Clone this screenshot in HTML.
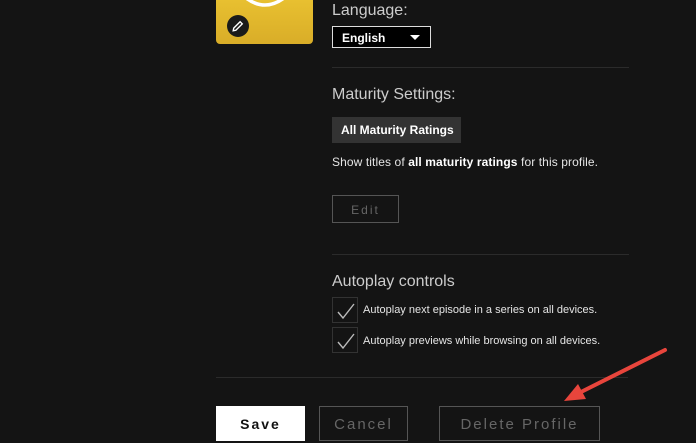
<!DOCTYPE html>
<html><head><meta charset="utf-8"><style>
*{margin:0;padding:0;box-sizing:border-box}
body{width:696px;height:443px;background:#141414;position:relative;overflow:hidden;font-family:"Liberation Sans",sans-serif;color:#ccc}
.a{position:absolute}
.hr{position:absolute;height:1px;background:#2b2b2b}
.btn{position:absolute;border:1px solid #555;color:#666;text-align:center;letter-spacing:2px}
.cb{position:absolute;width:26px;height:26px;border:1px solid #333;background:#141414}
</style></head><body>
<div class="a" style="left:216px;top:0;width:97px;height:44px;background:linear-gradient(#e8c030,#d9ad28);border-radius:0 0 4px 4px"></div>
<svg class="a" style="left:216px;top:0" width="97" height="20"><path d="M30 -2 Q49 12 68 -2" fill="none" stroke="#fff" stroke-width="3.5" stroke-linecap="round"/></svg>
<div class="a" style="left:227px;top:15px;width:22px;height:22px;border-radius:50%;background:#1a1a1a"></div>
<svg class="a" style="left:230px;top:18px" width="16" height="16" viewBox="0 0 15 15"><path d="M3 12 L3.5 9.5 L9.5 3.5 L11.5 5.5 L5.5 11.5 Z" fill="none" stroke="#fff" stroke-width="1.3"/></svg>
<div class="a" style="left:332px;top:2px;font-size:16px;color:#ccc">Language:</div>
<div class="a" style="left:332px;top:26px;width:99px;height:22px;background:#000;border:1px solid #ddd;color:#fff;font-weight:bold;font-size:12px;padding:4px 0 0 9px">English</div>
<div class="a" style="left:410px;top:35px;width:0;height:0;border-left:5px solid transparent;border-right:5px solid transparent;border-top:5px solid #fff"></div>
<div class="hr" style="left:332px;top:67px;width:297px"></div>
<div class="a" style="left:332px;top:86px;font-size:16px;color:#ccc">Maturity Settings:</div>
<div class="a" style="left:332px;top:117px;width:129px;height:26px;background:#333;color:#fff;font-weight:bold;font-size:12px;padding:6px 0 0 9px">All Maturity Ratings</div>
<div class="a" style="left:332px;top:155px;font-size:12px;color:#e5e5e5;letter-spacing:0.1px">Show titles of <b style="color:#fff">all maturity ratings</b> for this profile.</div>
<div class="btn" style="left:332px;top:195px;width:67px;height:28px;font-size:12px;padding-top:7px">Edit</div>
<div class="hr" style="left:332px;top:254px;width:297px"></div>
<div class="a" style="left:332px;top:273px;font-size:16px;color:#ccc">Autoplay controls</div>
<div class="cb" style="left:332px;top:297px"></div>
<div class="cb" style="left:332px;top:327px"></div>
<svg class="a" style="left:332px;top:297px" width="26" height="60"><path d="M6 15 L11 21 L22 7 M6 45 L11 51 L22 37" fill="none" stroke="#bbb" stroke-width="1.4"/></svg>
<div class="a" style="left:363px;top:304px;font-size:11px;color:#e5e5e5">Autoplay next episode in a series on all devices.</div>
<div class="a" style="left:363px;top:335px;font-size:11px;color:#e5e5e5">Autoplay previews while browsing on all devices.</div>
<div class="hr" style="left:216px;top:377px;width:412px"></div>
<div class="a" style="left:216px;top:406px;width:89px;height:35px;background:#fff;color:#111;font-weight:bold;font-size:14px;letter-spacing:2px;text-align:center;padding-top:10px">Save</div>
<div class="btn" style="left:319px;top:406px;width:89px;height:35px;font-size:15px;padding-top:9px">Cancel</div>
<div class="btn" style="left:439px;top:406px;width:161px;height:35px;font-size:15px;padding-top:9px">Delete Profile</div>
<svg class="a" style="left:550px;top:340px" width="130" height="70"><path d="M115 10 L25 55" stroke="#e8453c" stroke-width="4" stroke-linecap="round"/><path d="M14 61 L28 44 L36 59 Z" fill="#e8453c"/></svg>
</body></html>
